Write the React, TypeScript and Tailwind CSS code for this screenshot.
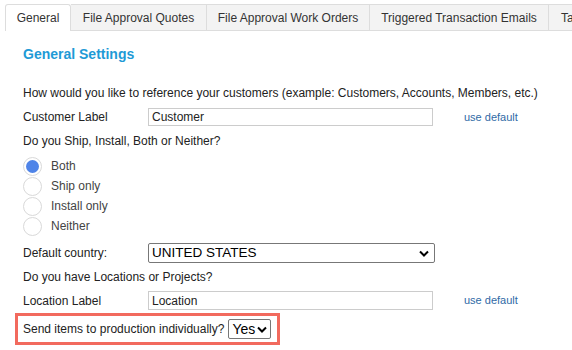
import React from "react";

function Radio({ checked, label }: { checked?: boolean; label: string }) {
  return (
    <div className="flex items-center h-5">
      <div className="w-[19px] h-[19px] rounded-full border border-[#d9d9d9] bg-white flex items-center justify-center">
        {checked && <div className="w-[13px] h-[13px] rounded-full bg-[#4f84e8]" />}
      </div>
      <span className="ml-[9px] text-[#444]">{label}</span>
    </div>
  );
}

function Chevron() {
  return (
    <svg width="10" height="7" viewBox="0 0 10 7">
      <path d="M1 1.5 L5 5.5 L9 1.5" stroke="#000" strokeWidth="2" fill="none" />
    </svg>
  );
}

export default function App() {
  return (
    <div className="w-[572px] h-[350px] overflow-hidden bg-white text-[12px] text-[#222] whitespace-nowrap" style={{ fontFamily: '"Liberation Sans", Arial, sans-serif' }}>
      <div className="flex pt-[4px]">
        <div className="w-[5px] shrink-0" />
        <div className="w-[66px] h-[27px] flex items-center justify-center border border-b-0 border-[#ddd] rounded-t-[3px] bg-white text-[#333] shrink-0">General</div>
        <div className="w-[136px] h-[27px] flex items-center justify-center border-t border-r border-b border-[#ddd] bg-[#f3f3f3] text-[#333] shrink-0">File Approval Quotes</div>
        <div className="w-[163px] h-[27px] flex items-center justify-center border-t border-r border-b border-[#ddd] bg-[#f3f3f3] text-[#333] shrink-0">File Approval Work Orders</div>
        <div className="w-[179px] h-[27px] flex items-center justify-center border-t border-r border-b border-[#ddd] bg-[#f3f3f3] text-[#333] shrink-0">Triggered Transaction Emails</div>
        <div className="h-[27px] pl-[12px] pr-[12px] flex items-center border-t border-r border-b border-[#ddd] bg-[#f3f3f3] text-[#333] shrink-0">Tasks</div>
      </div>
      <div className="pl-[23px]">
        <div className="mt-[14px] text-[14px] font-bold text-[#1e9ad6] leading-[18px]">General Settings</div>
        <div className="mt-[18px] leading-[24px]">How would you like to reference your customers (example: Customers, Accounts, Members, etc.)</div>
        <div className="flex items-center h-[24px]">
          <div className="w-[125px]">Customer Label</div>
          <div className="w-[285px] h-[18px] border border-[#ccc] flex items-center px-[3px]">Customer</div>
          <span className="ml-[31px] text-[11px] text-[#2f6aa6]">use default</span>
        </div>
        <div className="leading-[24px]">Do you Ship, Install, Both or Neither?</div>
        <div className="mt-[3px]">
          <Radio checked label="Both" />
          <Radio label="Ship only" />
          <Radio label="Install only" />
          <Radio label="Neither" />
        </div>
        <div className="flex items-center h-[26px] mt-[4px]">
          <div className="w-[125px]">Default country:</div>
          <div className="w-[287px] h-[20px] border border-[#777] rounded-[2px] flex items-center justify-between pl-[3px] pr-[5px] text-[13.5px] text-black">
            <span>UNITED STATES</span>
            <Chevron />
          </div>
        </div>
        <div className="leading-[22px]">Do you have Locations or Projects?</div>
        <div className="flex items-center h-[25px]">
          <div className="w-[125px]">Location Label</div>
          <div className="w-[285px] h-[19px] border border-[#ccc] flex items-center px-[3px]">Location</div>
          <span className="ml-[31px] text-[11px] text-[#2f6aa6]">use default</span>
        </div>
      </div>
      <div className="ml-[15px] w-[265px] h-[32px] border-[3px] border-[#f26a5e] flex items-center pl-[5px]">
        <span>Send items to production individually?</span>
        <div className="ml-[4px] h-[20px] w-[43px] border border-[#777] rounded-[2px] flex items-center justify-between pl-[3px] pr-[3px] text-[14px] text-black">
          <span>Yes</span>
          <Chevron />
        </div>
      </div>
    </div>
  );
}
